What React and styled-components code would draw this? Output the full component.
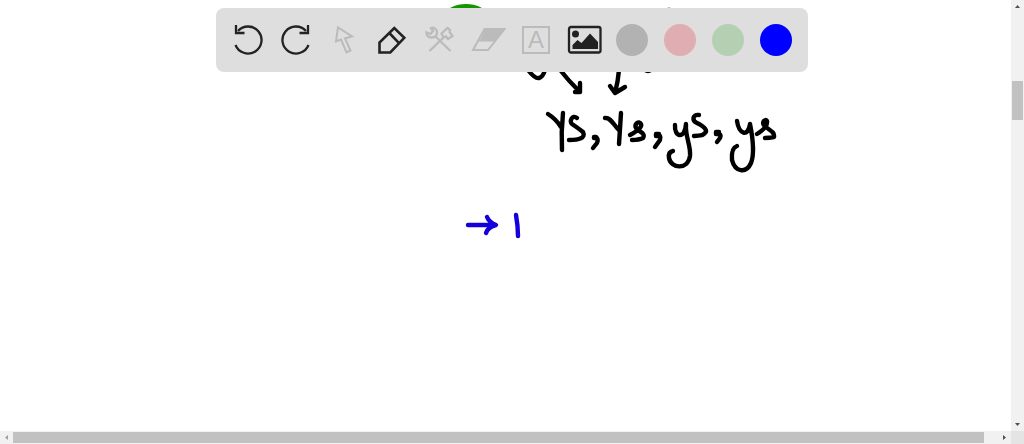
import React, { useState } from 'react'
import styled, { createGlobalStyle } from 'styled-components'

const GlobalStyle = createGlobalStyle`
    * {
        box-sizing: border-box;
    }

    body {
        margin: 0;
        overflow: hidden;
        font-family: 'Liberation Sans', Arial, sans-serif;
        background-color: white;
    }
`

const Page = styled.div`
    position: relative;
    display: grid;
    grid-template-columns: 1fr 13px;
    grid-template-rows: 1fr 13px;
    height: 100vh;
`

const Board = styled.main`
    overflow: hidden;
    background-color: white;
`

const Ink = styled.svg`
    display: block;
    width: 100%;
    height: 100%;
    fill: none;
    stroke-width: 4.400;
    stroke-linecap: round;
    stroke-linejoin: round;
`

// floats over the board
const Toolbar = styled.div`
    position: absolute;
    top: 8px;
    left: 0;
    right: 0;
    width: fit-content;
    margin: 0 auto;
    padding: 16px;
    display: flex;
    gap: 16px;
    border-radius: 8px;
    background-color: #dedede;
`

const ToolButton = styled.button`
    display: flex;
    align-items: center;
    justify-content: center;
    width: 32px;
    height: 32px;
    padding: 0;
    border: none;
    background: none;
    color: ${props => (props.$muted ? '#bbb' : '#222')};
    cursor: pointer;
`

const Icon = styled.svg`
    flex: none;
    width: 36px;
    height: 32px;
    fill: none;
    stroke: currentColor;
    stroke-width: ${props => props.$weight || 2};
`

const Letter = styled.text`
    font-size: 24px;
    text-anchor: middle;
    fill: currentColor;
    stroke: none;
`

const Swatch = styled.button`
    width: 32px;
    height: 32px;
    padding: 0;
    border: none;
    border-radius: 50%;
    background-color: ${props => props.$color};
    cursor: pointer;
`

const Scrollbar = styled.div`
    display: flex;
    flex-direction: ${props => (props.$vertical ? 'column' : 'row')};
    background-color: #f1f1f1;
`

const ScrollArrow = styled.button`
    flex: none;
    display: flex;
    align-items: center;
    justify-content: center;
    width: 13px;
    height: 13px;
    padding: 0;
    border: none;
    background: none;
    color: ${props => (props.$muted ? '#a0a0a0' : '#505050')};
`

const Track = styled.div`
    flex: 1;
    display: flex;
    flex-direction: ${props => (props.$vertical ? 'column' : 'row')};
`

const Thumb = styled.div`
    margin: ${props => (props.$vertical ? '0 1px' : '1px 0')};
    background-color: #c1c1c1;
`

const Corner = styled.div`
    background-color: #e4e4e4;
`

const TOOLS = [
    {
        name: 'Undo',
        weight: 2.3,
        icon: (
            <>
                <path d="M5.500 21A13.500 13.500 0 1 0 8 7" />
                <path d="M6 1v8h8.500" />
            </>
        )
    },
    {
        name: 'Redo',
        weight: 2.3,
        icon: (
            <>
                <path d="M30.500 21A13.500 13.500 0 1 1 28 7" />
                <path d="M30 1v8h-8.500" />
            </>
        )
    },
    {
        name: 'Select',
        muted: true,
        icon: (
            <path d="M12 3.500 10 17.500l5-2 5.500 13 4-2-5.500-12 7-2z" />
        )
    },
    {
        name: 'Pen',
        weight: 2.6,
        icon: <path d="M5.500 28.500v-10L20.300 4l10 9.800-14 14.700zM15.300 9l9.500 9.800" />
    },
    {
        name: 'Tools',
        muted: true,
        weight: 2.3,
        icon: (
            <>
                <path d="M7.500 27 22 13M28.500 27 13 12" />
                <path d="M9 4c3-1 6 1 6 4.500s-2.500 5-5.500 5-5-2-5-5l4 1.500 2.500-3z" />
                <path d="m19.500 9.500 6-5.500 2.500 2-.5 2 3 4-4.500 3-2-2.500-2.500 1z" />
            </>
        )
    },
    {
        name: 'Eraser',
        muted: true,
        icon: (
            <>
                <path
                    d="M10 16.500 15 5h0L34 5 25 16.500z"
                    fill="currentColor"
                    stroke="none"
                />
                <path d="M14.500 5H34.500L18 26H3L14.500 5z" />
                <path d="M9 16.500h16.500" />
            </>
        )
    },
    {
        name: 'Text',
        muted: true,
        icon: (
            <>
                <rect x="5" y="3" width="26" height="26" />
                <Letter x="18" y="24">
                    A
                </Letter>
            </>
        )
    },
    {
        name: 'Image',
        weight: 2.3,
        icon: (
            <>
                <rect x="3" y="3" width="31.500" height="25.500" rx="2" />
                <circle cx="9.500" cy="10" r="3.500" fill="currentColor" stroke="none" />
                <path
                    d="M6.500 25v-4l5-5 4 3 8.500-9.500 8 8.500v7z"
                    fill="currentColor"
                    stroke="none"
                />
            </>
        )
    }
]

const COLORS = [
    { name: 'Grey', value: '#b2b2b2' },
    { name: 'Pink', value: '#e0adb3' },
    { name: 'Green', value: '#b5cfb2' },
    { name: 'Blue', value: '#0000ff' }
]

const ARROWS = {
    up: 'M6.500 5 9 8H4z',
    down: 'M6.500 8 4 5h5z',
    left: 'M5 6.500 8 4v5z',
    right: 'M8 6.500 5 4v5z'
}

// every entry is one pen stroke on the board
const STROKES = [
    'M528 70Q535 79 539 78T545 70',
    'M561 71Q568 80 578 90M580 83L580 92L575 92',
    'M619 70Q618 82 615 93M610 86L615 93L625 87',
    'M645 70Q648 72 651 70',
    'M668 10h2',
    'M548 114Q556 119 561 127M563 113Q561 132 562 150',
    'M577 118C572 114 569 122 572 124Q578 128 583 132C586 138 579 140 569 140',
    'M595 137Q599 138 597 143L593 148M594 137h2v1h-2z',
    'M605 118C611 117 614 126 619 130M621 113Q620 128 619 144',
    'M630 135Q643 128 641 124C639 120 634 124 636 128C639 132 646 133 643 138Q639 140 632 140',
    'M656 134Q662 135 660 140L655 147M656 134h3v2h-3z',
    'M675 125C674 137 685 140 686 124C685 137 691 145 690 156C688 170 671 169 669 158Q668 152 673 151',
    'M699 115C692 114 692 121 697 123Q709 129 705 133C702 137 699 135 694 136',
    'M716 133Q722 133 720 138L717 142M716 132h3v2h-3z',
    'M737 121C739 134 748 138 750 124C753 139 755 153 751 163C746 174 735 172 732 160Q731 148 737 146',
    'M757 134Q768 127 767 121C765 118 761 123 765 126C768 130 775 131 774 137Q769 138 765 138'
]

const BLUE_STROKES = [
    'M468 225h26M487 217Q489 222 496 225Q488 227 486 233',
    'M516 215Q518 226 518 236'
]

const ArrowButton = ({ direction, muted }) => (
    <ScrollArrow aria-label={'Scroll ' + direction} $muted={muted}>
        <svg width="13" height="13" fill="currentColor">
            <path d={ARROWS[direction]} />
        </svg>
    </ScrollArrow>
)

// start and size are percentages of the track
const BoardScroll = ({ vertical, start, size }) => (
    <Scrollbar $vertical={vertical}>
        <ArrowButton direction={vertical ? 'up' : 'left'} muted={!start} />
        <Track $vertical={vertical}>
            <div style={{ flexBasis: start + '%' }} />
            <Thumb $vertical={vertical} style={{ flexBasis: size + '%' }} />
        </Track>
        <ArrowButton direction={vertical ? 'down' : 'right'} />
    </Scrollbar>
)

const App = () => {
    const [tool, setTool] = useState('Pen')
    const [color, setColor] = useState('Blue')

    return (
        <Page>
            <GlobalStyle />
            <Board>
                <Ink role="img" aria-label="Whiteboard">
                    <ellipse cx="466" cy="14" rx="20" ry="10" fill="#149600" />
                    <g stroke="black">
                        {STROKES.map(d => (
                            <path key={d} d={d} />
                        ))}
                    </g>
                    <g stroke="#1400dc">
                        {BLUE_STROKES.map(d => (
                            <path key={d} d={d} />
                        ))}
                    </g>
                </Ink>
            </Board>
            <BoardScroll vertical start={16.7} size={9.7} />
            <BoardScroll start={0} size={98.6} />
            <Corner />
            <Toolbar role="toolbar">
                {TOOLS.map(({ name, muted, weight, icon }) => (
                    <ToolButton
                        key={name}
                        aria-label={name}
                        aria-pressed={tool === name}
                        $muted={muted}
                        onClick={() => setTool(name)}
                    >
                        <Icon viewBox="0 0 36 32" $weight={weight}>
                            {icon}
                        </Icon>
                    </ToolButton>
                ))}
                {COLORS.map(({ name, value }) => (
                    <Swatch
                        key={name}
                        aria-label={name}
                        aria-pressed={color === name}
                        $color={value}
                        onClick={() => setColor(name)}
                    />
                ))}
            </Toolbar>
        </Page>
    )
}

export default App
